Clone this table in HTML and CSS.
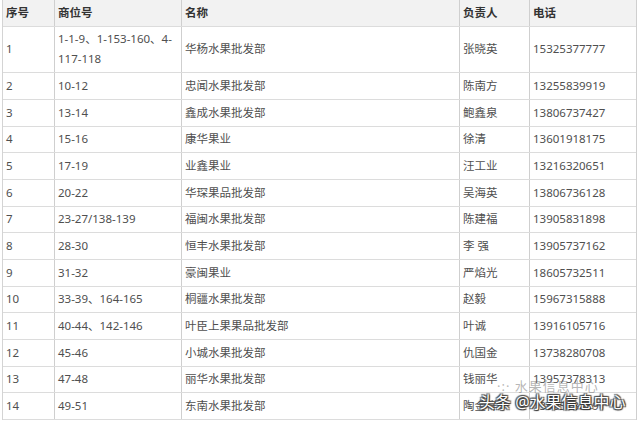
FILE: index.html
```html
<!DOCTYPE html>
<html lang="zh">
<head>
<meta charset="utf-8">
<link rel="stylesheet" href="styles.css">
</head>
<body>
<div class="page">
  <div class="table">
    <div class="row head">
      <div class="cell">序号</div><div class="cell">商位号</div><div class="cell">名称</div><div class="cell">负责人</div><div class="cell">电话</div>
    </div>
    <div class="row tall">
      <div class="cell">1</div><div class="cell">1-1-9、1-153-160、4-117-118</div><div class="cell">华杨水果批发部</div><div class="cell">张晓英</div><div class="cell">15325377777</div>
    </div>
    <div class="row">
      <div class="cell">2</div><div class="cell">10-12</div><div class="cell">忠闻水果批发部</div><div class="cell">陈南方</div><div class="cell">13255839919</div>
    </div>
    <div class="row">
      <div class="cell">3</div><div class="cell">13-14</div><div class="cell">鑫成水果批发部</div><div class="cell">鲍鑫泉</div><div class="cell">13806737427</div>
    </div>
    <div class="row">
      <div class="cell">4</div><div class="cell">15-16</div><div class="cell">康华果业</div><div class="cell">徐清</div><div class="cell">13601918175</div>
    </div>
    <div class="row">
      <div class="cell">5</div><div class="cell">17-19</div><div class="cell">业鑫果业</div><div class="cell">汪工业</div><div class="cell">13216320651</div>
    </div>
    <div class="row">
      <div class="cell">6</div><div class="cell">20-22</div><div class="cell">华琛果品批发部</div><div class="cell">吴海英</div><div class="cell">13806736128</div>
    </div>
    <div class="row">
      <div class="cell">7</div><div class="cell">23-27/138-139</div><div class="cell">福闽水果批发部</div><div class="cell">陈建福</div><div class="cell">13905831898</div>
    </div>
    <div class="row">
      <div class="cell">8</div><div class="cell">28-30</div><div class="cell">恒丰水果批发部</div><div class="cell">李 强</div><div class="cell">13905737162</div>
    </div>
    <div class="row">
      <div class="cell">9</div><div class="cell">31-32</div><div class="cell">豪闽果业</div><div class="cell">严焰光</div><div class="cell">18605732511</div>
    </div>
    <div class="row">
      <div class="cell">10</div><div class="cell">33-39、164-165</div><div class="cell">桐疆水果批发部</div><div class="cell">赵毅</div><div class="cell">15967315888</div>
    </div>
    <div class="row">
      <div class="cell">11</div><div class="cell">40-44、142-146</div><div class="cell">叶臣上果果品批发部</div><div class="cell">叶诚</div><div class="cell">13916105716</div>
    </div>
    <div class="row">
      <div class="cell">12</div><div class="cell">45-46</div><div class="cell">小城水果批发部</div><div class="cell">仇国金</div><div class="cell">13738280708</div>
    </div>
    <div class="row">
      <div class="cell">13</div><div class="cell">47-48</div><div class="cell">丽华水果批发部</div><div class="cell">钱丽华</div><div class="cell">13957378313</div>
    </div>
    <div class="row">
      <div class="cell">14</div><div class="cell">49-51</div><div class="cell">东南水果批发部</div><div class="cell">陶金祥</div><div class="cell">13905730591</div>
    </div>
  </div>
  <div class="ghost">·:· 水果信息中心</div>
  <div class="watermark">头条 @水果信息中心</div>
</div>
</body>
</html>
```
FILE: styles.css
```css
html, body {
  margin: 0;
  padding: 0;
  background: #fff;
}
body {
  font-family: "Noto Sans", "Noto Sans CJK SC", sans-serif;
  font-size: 11.5px;
  color: #4f4f4f;
}
.page {
  position: relative;
  width: 640px;
  height: 422px;
  overflow: hidden;
  padding-left: 2px;
  box-sizing: border-box;
}
.table {
  width: 633px;
  border-left: 1px solid #d4d4d4;
  border-right: 1px solid #cfcfcf;
}
.row {
  display: grid;
  grid-template-columns: 52px 127px 278px 70px 105px;
  height: 26.667px;
  box-sizing: border-box;
  border-bottom: 1px solid #dcdcdc;
}
.row.tall {
  height: 46.667px;
}
.row.head {
  background: #f2f2f2;
  color: #333;
  font-weight: 700;
}
.cell {
  display: flex;
  align-items: center;
  padding: 0 3px;
  border-right: 1px solid #cfcfcf;
  line-height: 20px;
  min-width: 0;
}
.cell:last-child {
  border-right: none;
}
.ghost {
  position: absolute;
  left: 497px;
  top: 376px;
  font-size: 13px;
  color: rgba(120, 120, 120, 0.55);
  letter-spacing: 1px;
}
.watermark {
  position: absolute;
  left: 479px;
  top: 392px;
  font-size: 16px;
  line-height: 20px;
  color: #fff;
  white-space: nowrap;
  text-shadow: 0 0 1px #222, 1px 1px 1px #333, -1px -1px 1px #555, 1px -1px 1px #555, -1px 1px 1px #555;
}
```
